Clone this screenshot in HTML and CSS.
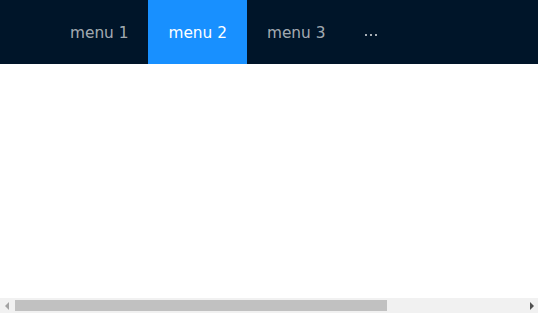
FILE: index.html
```html
<!DOCTYPE html>
<html>
<head>
<meta charset="utf-8">
<link rel="stylesheet" href="styles.css">
</head>
<body>
<div class="page">
  <header class="header">
    <ul class="menu">
      <li class="item">menu 1</li>
      <li class="item selected">menu 2</li>
      <li class="item">menu 3</li>
      <li class="item more"><span class="dots"><i></i><i></i><i></i></span></li>
    </ul>
  </header>
  <main class="content"></main>
  <div class="hscroll">
    <div class="arrow arrow-left"></div>
    <div class="track"><div class="thumb"></div></div>
    <div class="arrow arrow-right"></div>
  </div>
</div>
</body>
</html>
```
FILE: styles.css
```css
html, body {
  margin: 0;
  padding: 0;
  background: #fff;
}
.page {
  height: 313px;
  display: flex;
  flex-direction: column;
  overflow: hidden;
}
.header {
  flex: 0 0 64px;
  background: #001529;
  padding: 0 50px;
  overflow: hidden;
}
.menu {
  list-style: none;
  margin: 0;
  padding: 0;
  display: flex;
  height: 64px;
  font-family: "DejaVu Sans", sans-serif;
  font-size: 15.35px;
}
.item {
  padding: 0 20px;
  line-height: 64px;
  margin-top: 1px;
  color: rgba(255, 255, 255, 0.65);
  white-space: nowrap;
}
.item.selected {
  background: #1890ff;
  color: #fff;
  margin-top: 0;
  padding-top: 1px;
}
.more {
  display: flex;
  align-items: center;
}
.dots {
  display: flex;
  gap: 3px;
  margin-top: 5px;
}
.dots i {
  width: 2px;
  height: 2px;
  background: rgba(255, 255, 255, 0.65);
}
.content {
  flex: 1 1 auto;
}
.hscroll {
  flex: 0 0 15px;
  display: flex;
  background: #f1f1f1;
}
.arrow {
  width: 15px;
  height: 15px;
  display: flex;
  align-items: center;
  justify-content: center;
}
.arrow::before {
  content: "";
  width: 0;
  height: 0;
  border-top: 4px solid transparent;
  border-bottom: 4px solid transparent;
}
.arrow-left::before {
  border-right: 4px solid #a3a3a3;
  margin-right: 2px;
}
.arrow-right::before {
  border-left: 4px solid #505050;
  margin-left: 2px;
}
.track {
  flex: 1 1 auto;
  padding: 2px 0;
}
.thumb {
  width: 372px;
  height: 11px;
  background: #c1c1c1;
}
```
